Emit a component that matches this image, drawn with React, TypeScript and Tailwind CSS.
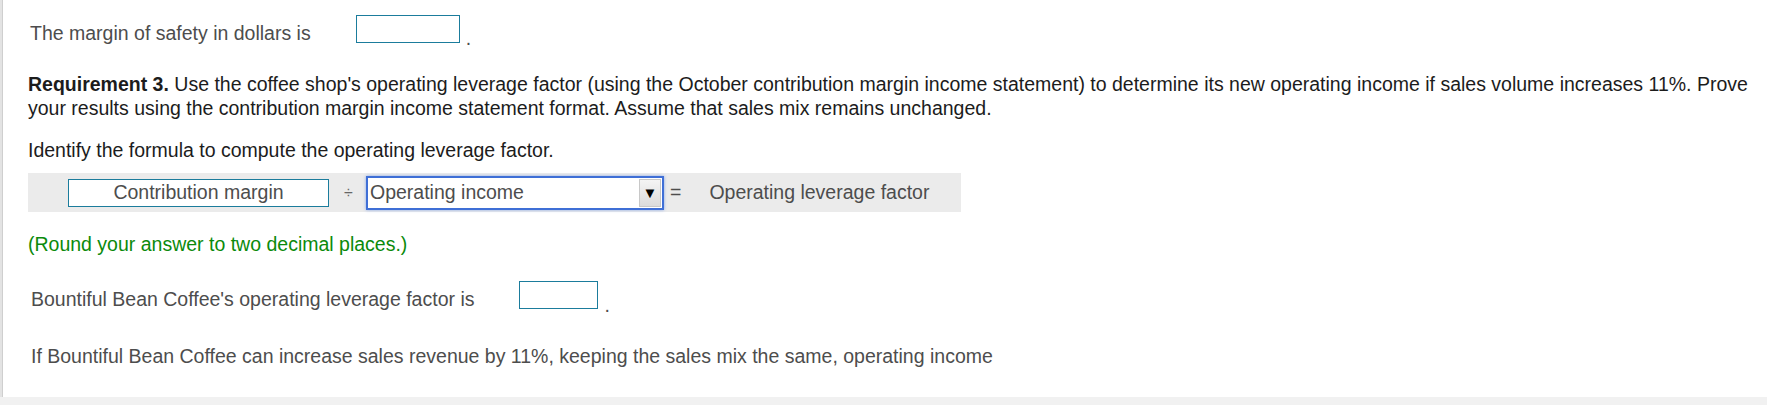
import React from "react";

const font = { fontFamily: '"Liberation Sans", Arial, sans-serif' };

function AnswerBox({ width }: { width: string }) {
  return <span className={`inline-block h-[28px] border border-[#1b7c9c] bg-white ${width}`} />;
}

export default function App() {
  return (
    <div className="h-[405px] w-full overflow-hidden bg-[#f1f1f1]" style={font}>
      <div className="flex h-[397px] bg-white">
        <div className="w-[3px] shrink-0 border-r border-[#cfcfcf] bg-[#e3e3e3]" />
        <div className="flex-1 pl-[25px] pr-[12px] text-[19.5px] text-[#4d4d4d]">
          {/* margin of safety */}
          <div className="flex items-center pt-[15px] pl-[2px]">
            <span className="leading-[28px]">The margin of safety in dollars is</span>
            <span className="ml-[45px]">
              <AnswerBox width="w-[104px] block" />
            </span>
            <span className="ml-[6px] self-end leading-[23px] mb-[1px]">.</span>
          </div>

          <p className="mt-[21px] leading-[24px] text-[#1c1c1c]">
            <span className="font-bold">Requirement 3.</span> Use the coffee shop&apos;s operating leverage factor
            (using the October contribution margin income statement) to determine its new operating income if
            sales volume increases 11%. Prove your results using the contribution margin income statement format.
            Assume that sales mix remains unchanged.
          </p>

          <p className="mt-[18px] leading-[24px] text-[#1c1c1c]">Identify the formula to compute the operating leverage factor.</p>

          {/* formula band */}
          <div className="mt-[11px] flex h-[39px] w-[933px] items-center bg-[#ebebeb] pl-[40px]">
            <div className="flex h-[28px] w-[261px] items-center justify-center border border-[#1b7c9c] bg-white">
              Contribution margin
            </div>
            <span className="ml-[15px] w-[16px] text-[16px] text-[#666]">÷</span>
            <div className="ml-[6px] flex h-[34px] w-[298px] items-center border-2 border-[#3f6fd6] bg-white shadow-[0_0_3px_#8aa8e8]">
              <span className="flex-1 pl-[2px] leading-none">Operating income</span>
              <span className="mr-[1px] flex h-[28px] w-[22px] items-center justify-center border border-[#c8c8c8] bg-gradient-to-b from-[#f4f4f4] to-[#dcdcdc] text-[15px] text-black">
                ▼
              </span>
            </div>
            <span className="ml-[6px] text-[19.5px]">=</span>
            <span className="ml-[28px]">Operating leverage factor</span>
          </div>

          <p className="mt-[20px] leading-[24px] text-[#0b8a0b]">(Round your answer to two decimal places.)</p>

          <div className="mt-[25px] flex items-center pl-[3px]">
            <span className="leading-[28px]">Bountiful Bean Coffee&apos;s operating leverage factor is</span>
            <span className="ml-[45px]">
              <AnswerBox width="w-[79px] block" />
            </span>
            <span className="ml-[6px] self-end leading-[23px] mb-[1px]">.</span>
          </div>

          <p className="mt-[26px] pl-[3px] leading-[24px]">
            If Bountiful Bean Coffee can increase sales revenue by 11%, keeping the sales mix the same, operating income
          </p>
        </div>
      </div>
    </div>
  );
}
